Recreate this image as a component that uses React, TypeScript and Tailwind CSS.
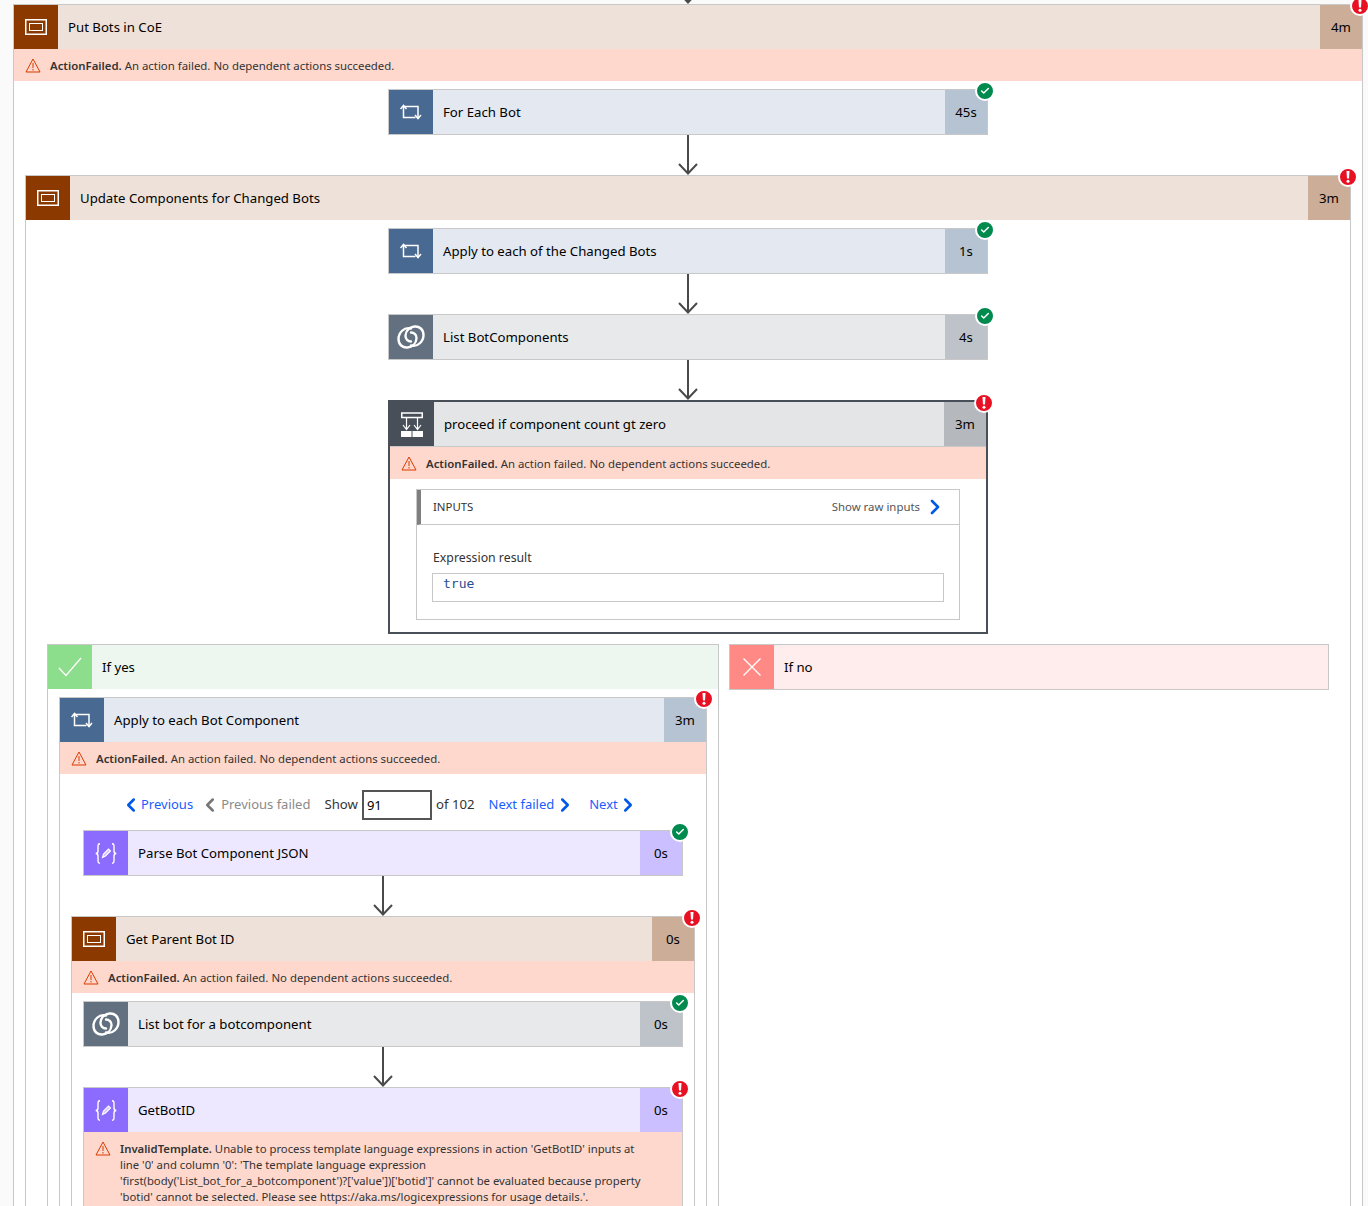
import type { ReactNode } from 'react';
import { Check, ChevronLeft, ChevronRight } from 'lucide-react';

type Kind = 'scope' | 'loop' | 'data' | 'cond' | 'parse';

const palette: Record<Kind, { icon: string; head: string; time: string }> = {
  scope: { icon: 'bg-[#8c3900]', head: 'bg-[#eee1d9]', time: 'bg-[#ccad98]' },
  loop: { icon: 'bg-[#486991]', head: 'bg-[#e4e8f0]', time: 'bg-[#b6c3d3]' },
  data: { icon: 'bg-[#637080]', head: 'bg-[#e7e9eb]', time: 'bg-[#bec3ca]' },
  cond: { icon: 'bg-[#484f58]', head: 'bg-[#e4e5e6]', time: 'bg-[#b5b8bc]' },
  parse: { icon: 'bg-[#8c6cff]', head: 'bg-[#ede8ff]', time: 'bg-[#cbbfff]' },
};

function KindIcon({ kind }: { kind: Kind }) {
  if (kind === 'scope') {
    return (
      <svg width="22" height="16" viewBox="0 0 22 16" fill="none" stroke="white">
        <rect x="0.75" y="0.75" width="20.5" height="14.5" strokeWidth="1.5" />
        <rect x="4.5" y="4.5" width="13" height="7" strokeWidth="1" />
      </svg>
    );
  }
  if (kind === 'loop') {
    return (
      <svg width="22" height="16" viewBox="0 0 22 16" fill="none" stroke="white" strokeWidth="1.5">
        <path d="M3.500 2V13.500H15.500" />
        <path d="M3.500 2.500H18V14.500" />
        <path d="M0.500 5L3.500 1.500L6.500 5" />
        <path d="M15 11L18 14.500L21 11" />
      </svg>
    );
  }
  if (kind === 'data') {
    return (
      <svg width="28" height="24" viewBox="0 0 28 24" fill="none" stroke="white" strokeWidth="2.400" strokeLinecap="round">
        <path d="M14 3.500C7 1.500 1.500 8 1.500 14C1.500 19.500 5.500 23 10.500 22.500C15 22 19 19 19.500 13.500C19.800 10 17 7.500 14 7.500" />
        <path d="M14 20.500C21 22.500 26.500 16 26.500 10C26.500 4.500 22.500 1 17.500 1.500C13 2 9 5 8.500 10.500C8.200 14 11 16.500 14 16.500" />
      </svg>
    );
  }
  if (kind === 'cond') {
    return (
      <svg width="22" height="25" viewBox="0 0 22 25" fill="none" stroke="white">
        <rect x="0.750" y="1" width="20.500" height="4.500" strokeWidth="1.500" />
        <path d="M5.500 6V17.500M2 13L5.500 17.500L9 13M16.500 6V17.500M13 13L16.500 17.500L20 13" strokeWidth="1.200" />
        <rect x="0" y="19" width="10.500" height="6" fill="white" stroke="none" />
        <rect x="11.500" y="19" width="10.500" height="6" fill="white" stroke="none" />
      </svg>
    );
  }
  return (
    <svg width="22" height="21" viewBox="0 0 22 21" fill="none" stroke="white" strokeWidth="1.400">
      <path d="M5 0.800C2.800 0.800 3 2.500 3 5V8C3 9.500 2.200 10.500 0.700 10.500C2.200 10.500 3 11.500 3 13V16C3 18.500 2.800 20.200 5 20.200" />
      <path d="M17 0.800C19.200 0.800 19 2.500 19 5V8C19 9.500 19.800 10.500 21.300 10.500C19.800 10.500 19 11.500 19 13V16C19 18.500 19.200 20.200 17 20.200" />
      <path d="M7.500 14.500L8.500 11L13.500 6L15.500 8L10.500 13L7.500 14.500Z" fill="white" fillOpacity="0.6" strokeWidth="1.100" />
    </svg>
  );
}

function Badge({ status }: { status: 'ok' | 'fail' }) {
  return (
    <div
      className={`absolute -right-[8px] -top-[9px] z-10 flex h-5 w-5 items-center justify-center rounded-full border-2 border-white ${
        status === 'ok' ? 'bg-[#008a4e]' : 'bg-[#e81123]'
      }`}
    >
      {status === 'ok' ? (
        <Check className="h-[10px] w-[10px] text-white" strokeWidth={3.5} />
      ) : (
        <svg width="4" height="12" viewBox="0 0 4 12" fill="white">
          <path d="M0.500 0H3.500L3 7.500H1Z" />
          <circle cx="2" cy="10.200" r="1.500" />
        </svg>
      )}
    </div>
  );
}

function Header({ kind, title, time }: { kind: Kind; title: string; time: string }) {
  const c = palette[kind];
  return (
    <div className={`flex h-[44px] items-center text-[13.2px] text-black ${c.head}`}>
      <div className={`flex h-full w-[44px] shrink-0 items-center justify-center ${c.icon}`}>
        <KindIcon kind={kind} />
      </div>
      <div className="flex-1 pl-[10px] pt-[1px]">{title}</div>
      <div className={`flex h-full w-[42px] shrink-0 items-center justify-center pt-[1px] ${c.time}`}>{time}</div>
    </div>
  );
}

function Warn() {
  return (
    <svg width="16" height="15" viewBox="0 0 16 15" fill="none" stroke="#d83b01" className="shrink-0">
      <path d="M8 1L15 14H1Z" strokeWidth="1" />
      <path d="M8 5V10M8 11V12.500" strokeWidth="1" />
    </svg>
  );
}

function ActionFailed() {
  return (
    <div className="flex h-[32px] items-center gap-[9px] bg-[#fed8cc] pl-[11px] text-[11.4px] text-[#333]">
      <Warn />
      <div className="pt-[1px]">
        <span className="font-semibold">ActionFailed.</span> An action failed. No dependent actions succeeded.
      </div>
    </div>
  );
}

function Arrow({ className = '' }: { className?: string }) {
  return (
    <div className={`flex h-[40px] justify-center ${className}`}>
      <svg width="20" height="40" viewBox="0 0 20 40" fill="none" stroke="#4a4a4a" strokeWidth="2">
        <path d="M10 0V39" />
        <path d="M1 29L10 38.500L19 29" />
      </svg>
    </div>
  );
}

function Card({ kind, title, time }: { kind: Kind; title: string; time: string }) {
  return (
    <div className="relative mx-auto w-[600px] border border-[#c8c8c8]">
      <Header kind={kind} title={title} time={time} />
      <Badge status="ok" />
    </div>
  );
}

// failed scope or loop: header plus error strip, children run on below it
function Group({ kind, title, time, error, children }: { kind: Kind; title: string; time: string; error?: boolean; children: ReactNode }) {
  return (
    <div className="relative border-x border-t border-[#c8c8c8] bg-white">
      <Header kind={kind} title={title} time={time} />
      {error && <ActionFailed />}
      <Badge status="fail" />
      {children}
    </div>
  );
}

function Condition() {
  return (
    <div className="relative mx-auto w-[600px] border-2 border-[#484f58] bg-white">
      <div className="border-b border-[#c8c8c8]">
        <Header kind="cond" title="proceed if component count gt zero" time="3m" />
      </div>
      <ActionFailed />
      <Badge status="fail" />
      <div className="px-[26px] pb-[12px] pt-[10px]">
        <div className="border border-[#c8c8c8]">
          <div className="flex h-[35px] items-center justify-between border-b border-[#c8c8c8] border-l-[4px] border-l-[#7f7f7f] pl-[12px] pr-[12px] text-[11.4px] text-[#333]">
            <span>INPUTS</span>
            <span className="flex items-center gap-[3px] text-[#555]">
              Show raw inputs
              <ChevronRight className="h-[24px] w-[24px] text-[#0058e6]" strokeWidth={2.6} />
            </span>
          </div>
          <div className="pb-[17px] pl-[15px] pr-[15px] pt-[24px]">
            <div className="mb-[6px] pl-[1px] text-[12.3px] leading-[18px] text-[#333]">Expression result</div>
            <div className="h-[29px] border border-[#c8c8c8] pl-[10px] font-['DejaVu_Sans_Mono',monospace] text-[13px] leading-[20px] text-[#2a4d8f]">
              true
            </div>
          </div>
        </div>
      </div>
    </div>
  );
}

function Pager() {
  return (
    <div className="flex h-[56px] items-center pl-[60px] pt-[6px] text-[13px] text-[#333]">
      <ChevronLeft className="h-[22px] w-[22px] text-[#0058e6]" strokeWidth={2.8} />
      <a className="-ml-[1px] text-[#1a5cff]">Previous</a>
      <ChevronLeft className="ml-[6px] h-[22px] w-[22px] text-[#777]" strokeWidth={2.8} />
      <span className="text-[#8a8a8a]">Previous failed</span>
      <span className="ml-[14px] text-[13.2px]">Show</span>
      <input
        readOnly
        value="91"
        className="ml-[4px] h-[30px] w-[70px] border-2 border-[#555] pl-[3px] text-[13px] text-black outline-none"
      />
      <span className="ml-[4px] text-[13.2px]">of 102</span>
      <a className="ml-[14px] text-[#1a5cff]">Next failed</a>
      <ChevronRight className="h-[22px] w-[22px] text-[#0058e6]" strokeWidth={2.8} />
      <a className="ml-[13px] text-[#1a5cff]">Next</a>
      <ChevronRight className="-ml-[1px] h-[22px] w-[22px] text-[#0058e6]" strokeWidth={2.8} />
    </div>
  );
}

function BranchHead({ yes }: { yes: boolean }) {
  return (
    <div className={`flex h-[44px] items-center text-[13.2px] text-black ${yes ? 'bg-[#edf7ef]' : 'bg-[#ffecec]'}`}>
      <div className={`flex h-full w-[44px] items-center justify-center ${yes ? 'bg-[#8cdd8c]' : 'bg-[#ff8a85]'}`}>
        {yes ? (
          <svg width="24" height="20" viewBox="0 0 24 20" fill="none" stroke="white" strokeWidth="1.300">
            <path d="M1 11L8 18.500L23 1" />
          </svg>
        ) : (
          <svg width="18" height="18" viewBox="0 0 18 18" fill="none" stroke="white" strokeWidth="1.300">
            <path d="M0.500 0.500L17.500 17.500M17.500 0.500L0.500 17.500" />
          </svg>
        )}
      </div>
      <div className="pl-[10px] pt-[1px]">{yes ? 'If yes' : 'If no'}</div>
    </div>
  );
}

export default function App() {
  return (
    <div className="h-[1206px] overflow-hidden bg-[#fafafa] pl-[13px] pt-[4px] font-['Noto_Sans',sans-serif]">
      <div className="w-[1350px]">
        <Arrow className="-mt-[40px]" />
        <Group kind="scope" title="Put Bots in CoE" time="4m" error>
          <div className="px-[11px] pt-[8px]">
            <Card kind="loop" title="For Each Bot" time="45s" />
            <Arrow />
            <Group kind="scope" title="Update Components for Changed Bots" time="3m">
              <div className="px-[21px] pt-[8px]">
                <Card kind="loop" title="Apply to each of the Changed Bots" time="1s" />
                <Arrow />
                <Card kind="data" title="List BotComponents" time="4s" />
                <Arrow />
                <Condition />
                <div className="mt-[10px] flex items-start gap-[10px]">
                  <div className="w-[672px] border-x border-t border-[#c8c8c8]">
                    <BranchHead yes />
                    <div className="px-[11px] pt-[8px]">
                      <Group kind="loop" title="Apply to each Bot Component" time="3m" error>
                        <Pager />
                        <div className="px-[11px]">
                          <Card kind="parse" title="Parse Bot Component JSON" time="0s" />
                          <Arrow />
                          <Group kind="scope" title="Get Parent Bot ID" time="0s" error>
                            <div className="px-[11px] pt-[8px]">
                              <Card kind="data" title="List bot for a botcomponent" time="0s" />
                              <Arrow />
                              <div className="relative mx-auto w-[600px] border-x border-t border-[#c8c8c8]">
                                <Header kind="parse" title="GetBotID" time="0s" />
                                <Badge status="fail" />
                                <div className="flex gap-[9px] bg-[#fed8cc] pb-[8px] pl-[11px] pr-[34px] pt-[9px] text-[11.3px] leading-[16px] text-[#333]">
                                  <Warn />
                                  <div>
                                    <span className="font-semibold">InvalidTemplate.</span> Unable to process template language expressions in action 'GetBotID' inputs at line '0' and column '0': 'The template language expression 'first(body('List_bot_for_a_botcomponent')?['value'])['botid']' cannot be evaluated because property 'botid' cannot be selected. Please see https://aka.ms/logicexpressions for usage details.'.
                                  </div>
                                </div>
                              </div>
                            </div>
                          </Group>
                        </div>
                      </Group>
                    </div>
                  </div>
                  <div className="w-[600px] border border-[#c8c8c8]">
                    <BranchHead yes={false} />
                  </div>
                </div>
              </div>
            </Group>
          </div>
        </Group>
      </div>
    </div>
  );
}
